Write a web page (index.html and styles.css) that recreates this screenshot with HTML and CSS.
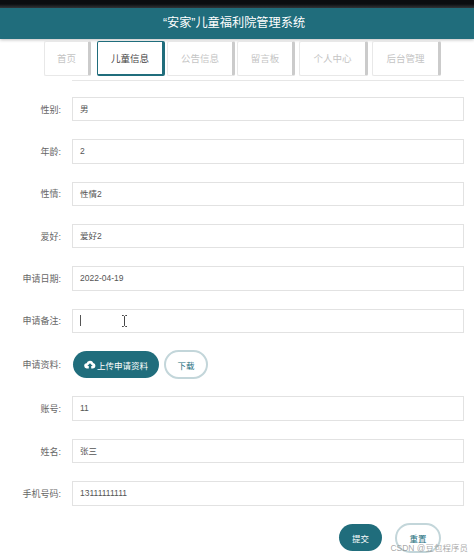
FILE: index.html
```html
<!DOCTYPE html>
<html lang="zh">
<head>
<meta charset="utf-8">
<title>“安家”儿童福利院管理系统</title>
<link rel="stylesheet" href="styles.css">
</head>
<body>
<div class="topbar"></div>
<header class="header">“安家”儿童福利院管理系统</header>
<nav class="tabs">
  <a class="tab t1">首页</a>
  <a class="tab t2 active">儿童信息</a>
  <a class="tab t3">公告信息</a>
  <a class="tab t4">留言板</a>
  <a class="tab t5">个人中心</a>
  <a class="tab t6">后台管理</a>
</nav>
<form class="form">
  <div class="row"><label>性别:</label><div class="input">男</div></div>
  <div class="row"><label>年龄:</label><div class="input">2</div></div>
  <div class="row"><label>性情:</label><div class="input">性情2</div></div>
  <div class="row"><label>爱好:</label><div class="input">爱好2</div></div>
  <div class="row"><label>申请日期:</label><div class="input">2022-04-19</div></div>
  <div class="row"><label>申请备注:</label><div class="input caret-input"><span class="caret"></span>
    <svg class="ibeam" width="7" height="12" viewBox="0 0 7 12"><path d="M1 .5h1.5L3.5 1.5 4.5.5H6M3.5 1.5v9M1 11.5h1.5l1-1 1 1H6" fill="none" stroke="#444" stroke-width="1"/></svg></div></div>
  <div class="row btn-row"><label>申请资料:</label>
    <span class="btn primary upload"><svg width="12" height="9" viewBox="0 0 12 9"><path d="M3 8.5a2.6 2.6 0 0 1-.4-5.2A3.5 3.5 0 0 1 9.3 3 2.8 2.8 0 0 1 9 8.5H7.2V6h1.5L6 3.2 3.3 6h1.5v2.5z" fill="#fff"/></svg>上传申请资料</span>
    <span class="btn ghost download">下载</span></div>
  <div class="row"><label>账号:</label><div class="input">11</div></div>
  <div class="row"><label>姓名:</label><div class="input">张三</div></div>
  <div class="row"><label>手机号码:</label><div class="input">13111111111</div></div>
  <div class="actions">
    <span class="btn primary submit">提交</span>
    <span class="btn ghost reset">重置</span>
  </div>
</form>
<div class="watermark">CSDN @豆包程序员</div>
</body>
</html>
```
FILE: styles.css
```css
* { box-sizing: border-box; }
html, body { margin: 0; padding: 0; }
body {
  width: 474px;
  height: 556px;
  overflow: hidden;
  position: relative;
  background: #fff;
  color: #555;
  font-family: "Liberation Sans", "Noto Sans CJK SC", sans-serif;
  font-size: 9px;
}
.topbar {
  height: 8px;
  background: linear-gradient(#0b0d10 0, #0b0d10 4px, #33383b 8px);
}
.header {
  height: 31px;
  background: #206d7c;
  color: #fff;
  font-size: 12.2px;
  line-height: 31px;
  text-align: center;
  padding-right: 6px;
  box-shadow: 0 1px 3px rgba(0, 0, 0, .25);
  position: relative;
}
.tabs {
  display: flex;
  height: 40px;
  margin: 2px 10px 0 44px;
  padding-bottom: 4px;
  position: relative;
}
.tabs::after {
  content: "";
  position: absolute;
  left: 28px;
  right: 0;
  bottom: 0;
  height: 1px;
  background: #e6e6e6;
}
.tab {
  height: 35px;
  line-height: 33px;
  text-align: center;
  font-size: 9.5px;
  color: #c4c4c4;
  background: #fff;
  border: 1px solid #e8e8e8;
  border-right: 3px solid #cbcbcb;
  border-radius: 2px;
}
.t1 { width: 47px; margin-right: 6px; }
.t2 { width: 68px; margin-right: 2px; }
.t3 { width: 68px; margin-right: 2px; }
.t4 { width: 58px; margin-right: 4px; }
.t5 { width: 69px; margin-right: 4px; }
.t6 { width: 69px; }
.tab.active {
  color: #444;
  border-color: #206d7c;
  border-right-color: #206d7c;
  border-bottom-width: 2px;
}
.form {
  margin-top: 16px;
  display: flex;
  flex-direction: column;
  gap: 18.4px;
}
.row {
  display: flex;
  align-items: center;
  height: 24px;
  padding-right: 10px;
}
.row label {
  width: 72px;
  padding-right: 11px;
  text-align: right;
  color: #666;
  font-size: 9px;
  flex: none;
}
.input {
  flex: 1;
  height: 24.5px;
  line-height: 23px;
  padding-left: 7px;
  border: 1px solid #e2e2e2;
  font-size: 8.5px;
  color: #555;
  background: #fff;
}
.caret-input {
  display: flex;
  align-items: center;
}
.caret {
  width: 1px;
  height: 11px;
  background: #555;
}
.ibeam { margin-left: 40px; }
.btn {
  display: inline-flex;
  align-items: center;
  justify-content: center;
  font-size: 8.5px;
  border-radius: 15px;
}
.primary { background: #206d7c; color: #fff; }
.ghost {
  background: #fff;
  color: #206d7c;
  border: 2px solid #c3d6da;
}
.btn-row { height: 27px; }
.upload { width: 86px; height: 27px; gap: 1px; margin-left: 1px; }
.download { width: 44px; height: 29px; margin-left: 5px; }
.actions {
  display: flex;
  justify-content: flex-end;
  align-items: center;
  gap: 13px;
  padding-right: 33px;
  margin-top: -1px;
}
.submit { width: 43px; height: 27px; }
.reset { width: 46px; height: 30px; }
.watermark {
  position: absolute;
  right: 6px;
  bottom: 3px;
  font-size: 8.5px;
  color: rgba(130, 130, 130, .7);
}
```
